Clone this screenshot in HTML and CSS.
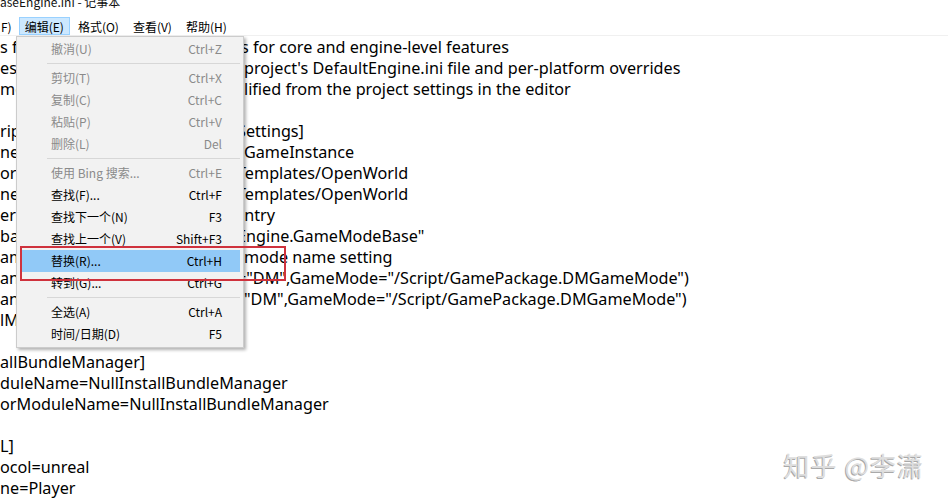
FILE: index.html
```html
<!DOCTYPE html>
<html lang="zh-CN">
<head>
    <meta charset="UTF-8">
    <meta name="viewport" content="width=device-width, initial-scale=1.0">
    <title>BaseEngine.ini - 记事本</title>
    <link rel="stylesheet" href="styles.css">
</head>
<body>
    <div class="window">
        <div class="titlebar"><span class="title">aseEngine.ini - 记事本</span></div>

        <div class="menubar">
            <span class="menu-item first">F)</span>
            <span class="menu-item active">编辑(E)</span>
            <span class="menu-item">格式(O)</span>
            <span class="menu-item">查看(V)</span>
            <span class="menu-item">帮助(H)</span>
        </div>

        <!-- text area, scrolled to the right a bit -->
        <div class="editor">
            <div class="line"><span class="left">s f</span><span class="right nudge-s">s for core and engine-level features</span></div>
            <div class="line"><span class="left">ese</span><span class="right">project's DefaultEngine.ini file and per-platform overrides</span></div>
            <div class="line"><span class="left">me</span><span class="right">lified from the project settings in the editor</span></div>
            <div class="line"></div>
            <div class="line"><span class="left">rip</span><span class="right nudge">Settings]</span></div>
            <div class="line"><span class="left">nel</span><span class="right">GameInstance</span></div>
            <div class="line"><span class="left">orS</span><span class="right nudge">Templates/OpenWorld</span></div>
            <div class="line"><span class="left">neD</span><span class="right nudge">Templates/OpenWorld</span></div>
            <div class="line"><span class="left">erl</span><span class="right nudge-l">entry</span></div>
            <div class="line"><span class="left">bal</span><span class="right nudge">Engine.GameModeBase"</span></div>
            <div class="line"><span class="left">am</span><span class="right">mode name setting</span></div>
            <div class="line"><span class="left">an</span><span class="right nudge">="DM",GameMode="/Script/GamePackage.DMGameMode")</span></div>
            <div class="line"><span class="left">an</span><span class="right">"DM",GameMode="/Script/GamePackage.DMGameMode")</span></div>
            <div class="line">lM</div>
            <div class="line"></div>
            <div class="line">allBundleManager]</div>
            <div class="line">duleName=NullInstallBundleManager</div>
            <div class="line">orModuleName=NullInstallBundleManager</div>
            <div class="line"></div>
            <div class="line">L]</div>
            <div class="line">ocol=unreal</div>
            <div class="line">ne=Player</div>
        </div>

        <!-- 编辑 dropdown -->
        <div class="dropdown">
            <div class="mi disabled"><span>撤消(U)</span><span>Ctrl+Z</span></div>
            <div class="sep"></div>
            <div class="mi disabled"><span>剪切(T)</span><span>Ctrl+X</span></div>
            <div class="mi disabled"><span>复制(C)</span><span>Ctrl+C</span></div>
            <div class="mi disabled"><span>粘贴(P)</span><span>Ctrl+V</span></div>
            <div class="mi disabled"><span>删除(L)</span><span>Del</span></div>
            <div class="sep"></div>
            <div class="mi disabled"><span>使用 Bing 搜索...</span><span>Ctrl+E</span></div>
            <div class="mi"><span>查找(F)...</span><span>Ctrl+F</span></div>
            <div class="mi"><span>查找下一个(N)</span><span>F3</span></div>
            <div class="mi"><span>查找上一个(V)</span><span>Shift+F3</span></div>
            <div class="mi hover"><span>替换(R)...</span><span>Ctrl+H</span></div>
            <div class="mi"><span>转到(G)...</span><span>Ctrl+G</span></div>
            <div class="sep"></div>
            <div class="mi"><span>全选(A)</span><span>Ctrl+A</span></div>
            <div class="mi"><span>时间/日期(D)</span><span>F5</span></div>
        </div>

        <div class="mark-box"></div>

        <div class="watermark">知乎 @李潇</div>
    </div>
</body>
</html>
```

FILE: styles.css
```css
body {
    margin: 0;
    background-color: #ffffff;
    color: #000000;
    font-family: "Noto Sans", "Noto Sans CJK SC", sans-serif;
    overflow: hidden;
}

.window {
    position: relative;
    width: 948px;
    height: 500px;
    overflow: hidden;
}

.titlebar {
    height: 16px;
    overflow: hidden;
    font-family: "Noto Sans CJK SC", sans-serif;
    font-size: 12px;
    line-height: 12px;
    color: #111111;
}

.title {
    display: block;
    margin-top: -4px;
    white-space: nowrap;
}

.menubar {
    display: flex;
    height: 20px;
    padding-top: 1px;
    box-sizing: border-box;
    border-bottom: 1px solid #f0f0f0;
    font-family: "Noto Sans CJK SC", sans-serif;
    font-size: 12px;
}

.menu-item {
    padding: 0 5px;
    line-height: 17px;
    border: 1px solid transparent;
    margin-right: 2px;
    white-space: nowrap;
}

.menu-item.first {
    padding-left: 0;
    padding-right: 6px;
    margin-right: 0;
}

.menu-item.active {
    background-color: #cce8ff;
    border-color: #99d1ff;
}

.editor {
    padding-top: 1px;
    font-size: 16.2px;
    line-height: 21px;
}

.line {
    height: 21px;
    white-space: pre;
    display: flex;
}

.left {
    width: 244px;
    flex-shrink: 0;
    overflow: hidden;
}

.right.nudge {
    margin-left: -7px;
}

.right.nudge-s {
    margin-left: -3px;
}

.right.nudge-l {
    margin-left: -9px;
}

/* dropdown menu */
.dropdown {
    position: absolute;
    left: 16px;
    top: 36px;
    width: 226px;
    padding: 1px 0 2px;
    background-color: #f2f2f2;
    border: 1px solid #cccccc;
    box-shadow: 2px 2px 3px rgba(0, 0, 0, 0.3);
    font-family: "Noto Sans CJK SC", sans-serif;
    font-size: 12px;
    z-index: 2;
}

.mi {
    display: flex;
    justify-content: space-between;
    height: 22px;
    line-height: 22px;
    margin: 0 3px;
    padding: 0 18px 0 31px;
    color: #000000;
    white-space: nowrap;
}

.mi.disabled {
    color: #8a8a8a;
}

.mi.hover {
    background-color: #91c9f7;
}

.sep {
    height: 1px;
    margin: 3px 3px 3px 30px;
    background-color: #d7d7d7;
}

.mark-box {
    position: absolute;
    left: 20px;
    top: 246px;
    width: 266px;
    height: 35px;
    box-sizing: border-box;
    border: 2px solid #cf323d;
    z-index: 3;
}

.watermark {
    position: absolute;
    right: 24px;
    bottom: 20px;
    font-family: "Noto Sans CJK SC", sans-serif;
    font-size: 26px;
    line-height: 30px;
    color: #dedede;
    text-shadow: -1px 1px 0 #a9a9a9;
    letter-spacing: 1px;
}
```
